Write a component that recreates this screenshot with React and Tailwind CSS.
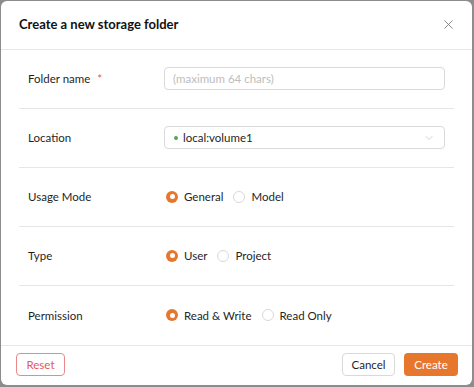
import { X, ChevronDown } from 'lucide-react';

const Radio = ({ label, checked }) => (
  <label className="flex items-center gap-[6px] mr-[10px]">
    <span
      className={
        checked
          ? 'w-[12px] h-[12px] rounded-full bg-[#e8772e] flex items-center justify-center'
          : 'w-[12px] h-[12px] rounded-full border border-[#d9d9d9] bg-white'
      }
    >
      {checked && <span className="w-[5px] h-[5px] rounded-full bg-white" />}
    </span>
    <span className="text-[11.5px] text-[#262626]">{label}</span>
  </label>
);

const Row = ({ label, required, children, last }) => (
  <div
    className={
      last
        ? 'flex items-center h-[59px] px-[9px]'
        : 'flex items-center h-[59px] px-[9px] border-b border-[#e6e6e6]'
    }
  >
    <div className="w-[138px] text-[11.5px] text-[#1f1f1f] flex items-center">
      {label}
      {required && <span className="text-[#e05a5a] ml-[7px]">*</span>}
    </div>
    <div className="flex-1 flex items-center">{children}</div>
  </div>
);

const App = () => {
  return (
    <div
      className="w-[474px] h-[387px] bg-[#8c8c8c] pl-[1px] pt-[1px] pr-[2px] pb-[2px]"
      style={{ fontFamily: 'Lato, "Noto Sans", sans-serif' }}
    >
      <div className="w-full h-full bg-white rounded-[6px] flex flex-col">
        {/* Header */}
        <div className="flex items-center justify-between h-[50px] pl-[18px] pr-[16px] border-b border-[#e6e6e6]">
          <h2 className="text-[13px] font-bold text-[#111]">Create a new storage folder</h2>
          <X size={15} strokeWidth={1.4} className="text-[#777]" />
        </div>

        {/* Body */}
        <div className="flex-1 px-[18px]">
          <Row label="Folder name" required>
            <div className="w-[281px] h-[23px] border border-[#d9d9d9] rounded-[4px] flex items-center px-[8px] text-[11.5px] text-[#bdbdbd]">
              (maximum 64 chars)
            </div>
          </Row>
          <Row label="Location">
            <div className="w-[281px] h-[23px] border border-[#d9d9d9] rounded-[4px] flex items-center px-[8px] text-[11.5px] text-[#1f1f1f]">
              <span className="w-[4px] h-[4px] rounded-full bg-[#52a65a] mr-[5px] ml-[1px]" />
              <span className="flex-1">local:volume1</span>
              <ChevronDown size={12} strokeWidth={1.5} className="text-[#c4c4c4] mr-[1px]" />
            </div>
          </Row>
          <Row label="Usage Mode">
            <Radio label="General" checked />
            <Radio label="Model" />
          </Row>
          <Row label="Type">
            <Radio label="User" checked />
            <Radio label="Project" />
          </Row>
          <Row label="Permission" last>
            <Radio label="Read & Write" checked />
            <Radio label="Read Only" />
          </Row>
        </div>

        {/* Footer */}
        <div className="flex items-center justify-between h-[41px] pl-[15px] pr-[14px] border-t border-[#e6e6e6] pb-[2px]">
          <button className="w-[49px] h-[23px] border border-[#e88a8a] rounded-[4px] text-[11.5px] text-[#e05a5a]">
            Reset
          </button>
          <div className="flex gap-[9px]">
            <button className="w-[53px] h-[23px] border border-[#d9d9d9] rounded-[4px] text-[11.5px] text-[#1f1f1f]">
              Cancel
            </button>
            <button className="w-[54px] h-[23px] rounded-[4px] bg-[#e8772e] text-[11.5px] text-white">
              Create
            </button>
          </div>
        </div>
      </div>
    </div>
  );
};

export default App;
